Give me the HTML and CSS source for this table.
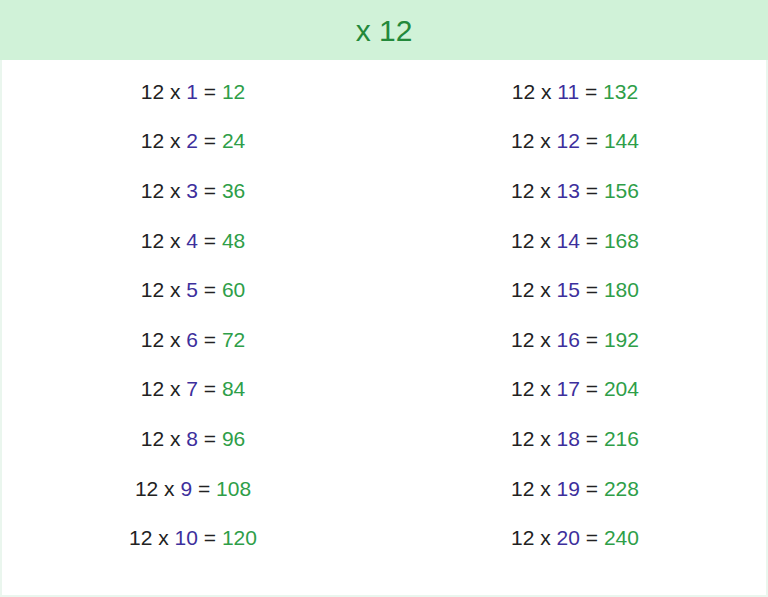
FILE: index.html
```html
<!DOCTYPE html>
<html>
<head>
<meta charset="utf-8">
<link rel="stylesheet" href="styles.css">
</head>
<body>
<div class="page">
  <div class="header">x 12</div>
  <div class="table">
    <div class="row">12 x <span class="m">1</span> = <span class="r">12</span></div>
    <div class="row">12 x <span class="m">2</span> = <span class="r">24</span></div>
    <div class="row">12 x <span class="m">3</span> = <span class="r">36</span></div>
    <div class="row">12 x <span class="m">4</span> = <span class="r">48</span></div>
    <div class="row">12 x <span class="m">5</span> = <span class="r">60</span></div>
    <div class="row">12 x <span class="m">6</span> = <span class="r">72</span></div>
    <div class="row">12 x <span class="m">7</span> = <span class="r">84</span></div>
    <div class="row">12 x <span class="m">8</span> = <span class="r">96</span></div>
    <div class="row">12 x <span class="m">9</span> = <span class="r">108</span></div>
    <div class="row">12 x <span class="m">10</span> = <span class="r">120</span></div>
    <div class="row">12 x <span class="m">11</span> = <span class="r">132</span></div>
    <div class="row">12 x <span class="m">12</span> = <span class="r">144</span></div>
    <div class="row">12 x <span class="m">13</span> = <span class="r">156</span></div>
    <div class="row">12 x <span class="m">14</span> = <span class="r">168</span></div>
    <div class="row">12 x <span class="m">15</span> = <span class="r">180</span></div>
    <div class="row">12 x <span class="m">16</span> = <span class="r">192</span></div>
    <div class="row">12 x <span class="m">17</span> = <span class="r">204</span></div>
    <div class="row">12 x <span class="m">18</span> = <span class="r">216</span></div>
    <div class="row">12 x <span class="m">19</span> = <span class="r">228</span></div>
    <div class="row">12 x <span class="m">20</span> = <span class="r">240</span></div>
  </div>
</div>
</body>
</html>
```

FILE: styles.css
```css
html, body {
  margin: 0;
  padding: 0;
  background: #ffffff;
}
body {
  font-family: "Liberation Sans", Arial, sans-serif;
}
.page {
  box-sizing: border-box;
  width: 768px;
  height: 597px;
  border: 2px solid #eaf6ee;
  border-top: none;
  background: #ffffff;
}
.header {
  height: 60px;
  margin: 0 -2px;
  background: #d0f2d8;
  color: #23893b;
  font-size: 30px;
  line-height: 62px;
  text-align: center;
}
.table {
  display: grid;
  grid-template-columns: 1fr 1fr;
  grid-template-rows: repeat(10, 49.6px);
  grid-auto-flow: column;
  padding-top: 7px;
}
.row {
  display: flex;
  align-items: center;
  justify-content: center;
  font-size: 21px;
  color: #222222;
  white-space: pre;
}
.m {
  color: #3d2f9c;
}
.r {
  color: #2e9e48;
}
```
